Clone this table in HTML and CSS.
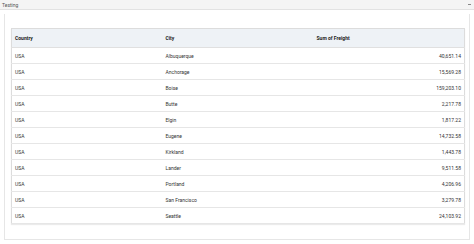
FILE: index.html
```html
<!DOCTYPE html>
<html lang="en">
<head>
  <meta charset="UTF-8" />
  <title>Testing</title>
  <link rel="stylesheet" href="styles.css">
</head>
<body>

  <div class="titlebar">
    <span class="title">Testing</span>
    <span class="menu-icon"></span>
  </div>

  <div class="panel">
    <table>
      <colgroup>
        <col class="c1"><col class="c2"><col class="c3">
      </colgroup>
      <thead>
        <tr>
          <th>Country</th>
          <th>City</th>
          <th>Sum of Freight</th>
        </tr>
      </thead>
      <tbody>
        <tr><td>USA</td><td>Albuquerque</td><td class="num">40,651.14</td></tr>
        <tr><td>USA</td><td>Anchorage</td><td class="num">15,569.28</td></tr>
        <tr><td>USA</td><td>Boise</td><td class="num">159,203.10</td></tr>
        <tr><td>USA</td><td>Butte</td><td class="num">2,217.78</td></tr>
        <tr><td>USA</td><td>Elgin</td><td class="num">1,817.22</td></tr>
        <tr><td>USA</td><td>Eugene</td><td class="num">14,732.58</td></tr>
        <tr><td>USA</td><td>Kirkland</td><td class="num">1,443.78</td></tr>
        <tr><td>USA</td><td>Lander</td><td class="num">9,511.58</td></tr>
        <tr><td>USA</td><td>Portland</td><td class="num">4,206.96</td></tr>
        <tr><td>USA</td><td>San Francisco</td><td class="num">3,279.78</td></tr>
        <tr><td>USA</td><td>Seattle</td><td class="num">24,103.92</td></tr>
      </tbody>
    </table>
  </div>

</body>
</html>
```

FILE: styles.css
```css
body {
  margin: 0;
  font-family: Roboto, "Liberation Sans", sans-serif;
  background: #fff;
  color: #333;
}
.titlebar {
  height: 10px;
  background: #f4f4f4;
  border-bottom: 1px solid #e2e2e2;
  display: flex;
  justify-content: space-between;
  align-items: center;
  padding: 0 3px 0 2px;
  box-sizing: border-box;
}
.title {
  font-size: 5px;
  color: #555;
}
.menu-icon {
  width: 3px;
  height: 1px;
  background: #888;
}
.panel {
  margin: 4px 4px 0 4px;
  height: 226px;
  border-left: 1px solid #e6e6e6;
  border-right: 1px solid #e6e6e6;
  border-bottom: 1px solid #e6e6e6;
  padding: 14px 4px 0 6px;
  box-sizing: border-box;
}
table {
  width: 100%;
  border-collapse: collapse;
  table-layout: fixed;
  border: 1px solid #dcdcdc;
  box-shadow: 0 1px 1px rgba(0, 0, 0, 0.08);
  font-size: 5px;
}
th {
  background: #eef2f6;
  color: #222;
  font-weight: bold;
  text-align: left;
  height: 18px;
  padding: 0 3px;
  border-bottom: 1px solid #e0e0e0;
}
td {
  height: 15px;
  padding: 0 3px;
  border-bottom: 1px solid #e6e6e6;
  color: #333;
}
td.num {
  text-align: right;
}
```
